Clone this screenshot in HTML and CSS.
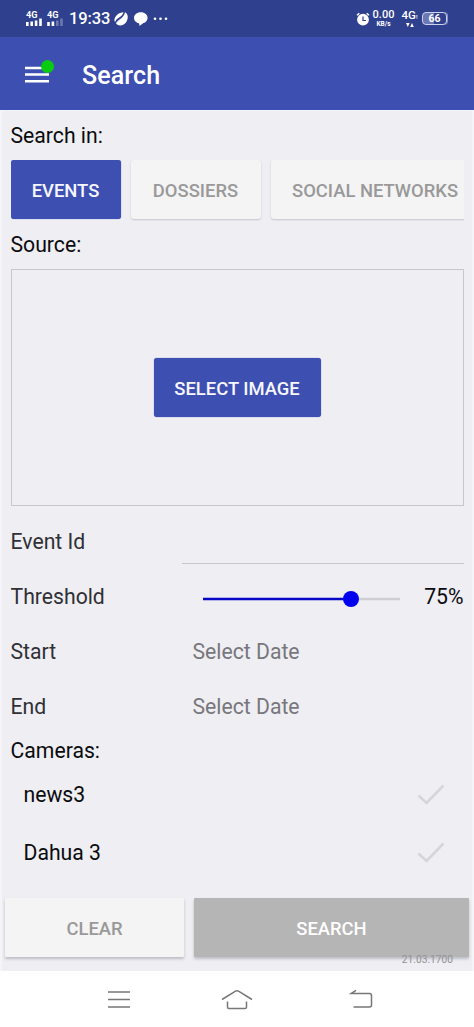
FILE: index.html
```html
<!DOCTYPE html>
<html lang="en">
<head>
<meta charset="utf-8">
<title>Search</title>
<link rel="stylesheet" href="styles.css">
</head>
<body>
<div class="screen">
  <div class="status">
    <svg class="signals" width="38" height="18" viewBox="0 0 38 18" fill="#fff">
      <g class="net"><text x="0" y="8" textLength="11.500" lengthAdjust="spacingAndGlyphs">4G</text><text x="21" y="8" textLength="11.500" lengthAdjust="spacingAndGlyphs">4G</text></g>
      <path d="M0 12h2.600v4H0zM4.400 11.400h2.600V16h-2.600zM8.800 10.400h2.600V16h-2.600zM13.200 8.500h2.600V16h-2.600zM21.200 12h2.600v4h-2.600zM25.600 11.400h2.600V16h-2.600z"/>
      <path opacity=".3" d="M30 10.400h2.600V16h-2.600zM34.200 8.500h2.600V16h-2.600z"/>
    </svg>
    <span class="clock">19:33</span>
    <svg class="notices" width="54" height="16" viewBox="0 0 54 16" fill="#fff">
      <path d="M0.300 9C1 4.500 5 1.300 9.500 1.200 8.500 5 5 6.500 2.500 8.500L1 11zM11 1.300C14.500 3 14.500 8 12 11.500 9 15 4.500 15.300 2 12.500 3.500 8.500 10 7.500 11 1.300z"/>
      <path d="M26.800 1.200c4 0 6.800 2.500 6.800 5.600 0 2.600-1.800 4.700-4.500 5.400L25.500 15l-.3-2.600c-3-.5-5.200-2.700-5.200-5.600 0-3.100 2.800-5.600 6.800-5.600z"/>
      <circle cx="41" cy="7.700" r="1.300"/><circle cx="46.500" cy="7.700" r="1.300"/><circle cx="52" cy="7.700" r="1.300"/>
    </svg>
    <span class="grow"></span>
    <svg class="alarm" width="14" height="14" viewBox="0 0 14 14">
      <circle cx="7" cy="7.700" r="5.900" fill="#fff"/>
      <path d="M1 3.300L3.300 1.200M10.700 1.200L13 3.300" stroke="#fff" stroke-width="1.500"/>
      <path d="M7 4.500v4h3" fill="none" stroke="#2e4090" stroke-width="1.200"/>
    </svg>
    <span class="speed"><b>0.00</b><small>KB/s</small></span>
    <span class="data"><b>4G<i>!</i></b>
      <svg width="8" height="4" viewBox="0 0 8 4" fill="#fff"><path d="M0 0h3.600L1.800 4zM4.200 4h3.600L6 0z"/></svg>
    </span>
    <span class="battery">66</span>
  </div>
  <header class="bar">
    <div class="menu">
      <svg width="25" height="18" viewBox="0 0 25 18" stroke="#fff" stroke-width="2.500"><path d="M0 3h24M0 9.500h24M0 16.200h24"/></svg>
      <span class="dot"></span>
    </div>
    <h1>Search</h1>
  </header>
  <main>
    <div class="label first">Search in:</div>
    <div class="tabs">
      <button class="tab active">EVENTS</button>
      <button class="tab mid">DOSSIERS</button>
      <button class="tab wide">SOCIAL NETWORKS</button>
    </div>
    <div class="label source">Source:</div>
    <div class="drop"><button class="tab active pick">SELECT IMAGE</button></div>
    <div class="row"><span class="name">Event Id</span><span class="input"></span></div>
    <div class="row"><span class="name">Threshold</span>
      <svg class="slider" width="200" height="18" viewBox="0 0 200 18">
        <path d="M148 9h50" stroke="#ceced4" stroke-width="2.500"/>
        <path d="M1 9h148" stroke="#0707c6" stroke-width="2.500"/>
        <circle cx="149" cy="9" r="8" fill="#0000f0"/>
      </svg>
      <span class="value">75%</span></div>
    <div class="row"><span class="name">Start</span><span class="date">Select Date</span></div>
    <div class="row"><span class="name">End</span><span class="date">Select Date</span></div>
    <div class="label cameras">Cameras:</div>
    <div class="camera"><span>news3</span><svg width="28" height="22" viewBox="0 0 28 22"><path d="M1.500 11.500l8 7.500L26.500 1.500" fill="none" stroke="#d5d5da" stroke-width="2.600"/></svg></div>
    <div class="camera"><span>Dahua 3</span><svg width="28" height="22" viewBox="0 0 28 22"><path d="M1.500 11.500l8 7.500L26.500 1.500" fill="none" stroke="#d5d5da" stroke-width="2.600"/></svg></div>
    <div class="actions">
      <button class="clear">CLEAR</button>
      <button class="search">SEARCH</button>
      <span class="version">21.03.1700</span>
    </div>
  </main>
  <nav>
    <svg width="22" height="17" viewBox="0 0 22 17"><path d="M0 1h22M0 8.500h22M0 16h22"/></svg>
    <svg class="home" width="32" height="21" viewBox="0 0 32 21"><path d="M1 10.500L14.500 2.200Q16 1.300 17.500 2.200L31 10.500M6.500 12.500v5.500q0 1.500 1.500 1.500h16q1.500 0 1.500-1.500v-5.500"/></svg>
    <svg width="24" height="20" viewBox="0 0 24 20"><path d="M7 1.300L2 4.500h18.500q2 0 2 2V16q0 2-2 2H4.500"/></svg>
  </nav>
</div>
</body>
</html>
```
FILE: styles.css
```css
* { box-sizing: border-box; }
body { margin: 0; font-family: Roboto, sans-serif; font-size: 21.2px; background: #fff; }
.screen { width: 474px; height: 1027px; display: flex; flex-direction: column; overflow: hidden; }
.status { height: 37px; background: #2f408e; color: #fff; display: flex; align-items: center; padding: 0 26px; flex: none; }
.net { font-size: 9px; font-weight: 700; }
.clock { font-size: 16.5px; font-weight: 500; width: 41px; margin-left: 5px; line-height: 20px; white-space: nowrap; letter-spacing: -.1px; }
.notices { margin-left: 4px; }
.grow { flex: 1; }
.speed, .data { display: flex; flex-direction: column; align-items: center; }
.speed { width: 21px; margin-left: 3px; margin-right: 7px; }
.speed b { font-size: 11px; line-height: 10px; font-weight: 500; }
.speed small { font-size: 6.5px; line-height: 8px; font-weight: 700; }
.data { width: 17px; }
.data b { font-size: 11.5px; line-height: 11px; font-weight: 500; white-space: nowrap; }
.data i { font-size: 6px; font-style: normal; }
.data svg { margin-top: 1px; }
.battery { width: 25px; height: 13px; margin: 0 1px 0 4px; border: 1px solid #cdd3ee; border-radius: 4px; background: linear-gradient(90deg, #6b78b5 50%, transparent 50%); font-size: 10.5px; line-height: 11px; font-weight: 700; text-align: center; box-shadow: 1px 0 0 #8791c4; }
.bar { height: 73px; flex: none; background: #3e4fb2; color: #fff; display: flex; align-items: center; padding-left: 25px; }
.menu { position: relative; width: 25px; height: 18px; display: flex; }
.dot { position: absolute; left: 16px; top: -5px; width: 13px; height: 13px; border-radius: 50%; background: #08cc10; }
h1 { margin: 4px 0 0 32px; font-size: 25px; line-height: 30px; font-weight: 500; letter-spacing: .1px; }
main { flex: none; height: 861px; background: #eeeef3; border: solid #f5f5f9; border-width: 1px 2px 0; padding: 0 8.5px; color: #0b0b0e; display: flex; flex-direction: column; }
.label { line-height: 26px; flex: none; }
.first { padding: 12px 0 11px; }
.tabs { display: flex; gap: 10px; height: 61px; padding-bottom: 2px; overflow: hidden; flex: none; }
button { border: 0; padding: 2px 0 0; font-family: inherit; font-size: 18.4px; font-weight: 500; color: #999; background: #f4f4f4; border-radius: 3px; box-shadow: 0 1px 2px #c5c5cd; white-space: nowrap; }
.tab { width: 110px; height: 59px; flex: none; }
.tab.active { background: #3e4fb2; color: #f7f8ff; box-shadow: 0 0 1px #3e4fb2; }
.tab.mid { width: 130px; }
.tab.wide { width: 210px; text-align: left; padding-left: 21.5px; }
.source { padding: 11px 0; }
.drop { height: 237px; flex: none; border: 1px solid #c6c6cb; display: flex; align-items: center; justify-content: center; }
.tab.pick { width: 167px; }
.row { height: 55px; flex: none; display: flex; align-items: center; }
.drop + .row { margin-top: 8px; }
.name { width: 171px; color: #303035; }
.input { flex: 1; height: 1px; background: #c7c7cc; margin-top: 43px; }
.slider { margin-left: 20px; margin-top: 4px; }
.value { margin-left: auto; }
.date { padding-left: 11px; color: #77777c; }
.cameras { padding: 4px 0 2px; }
.camera { height: 58px; flex: none; display: flex; align-items: center; justify-content: space-between; padding: 0 18.5px 0 13px; }
.camera span { padding-bottom: 2px; }
.actions { position: relative; display: flex; gap: 10px; margin: 16px -5.5px 0; height: 59px; flex: none; }
.actions button { border-radius: 1px; box-shadow: 0 2px 3px #bcbcc4; }
.clear { width: 179px; }
.actions .search { flex: 1; background: #b5b5b5; color: #fff; }
.version { position: absolute; right: 16px; bottom: -10px; font-size: 10.2px; line-height: 14px; color: #929297; }
nav { height: 56px; display: flex; align-items: center; justify-content: space-between; padding: 0 101px 0 108px; }
nav svg { fill: none; stroke: #77777a; stroke-width: 1.5; }
nav .home { margin-right: 5px; }
```
